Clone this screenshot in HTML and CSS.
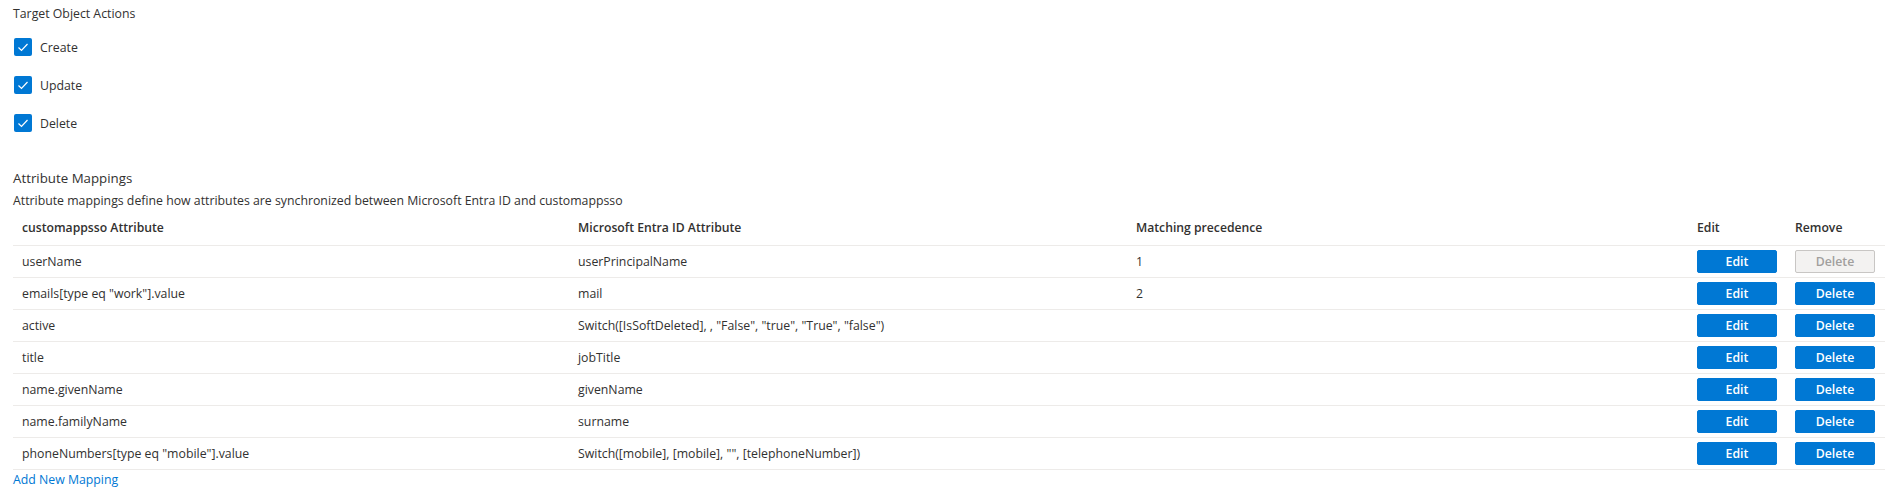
FILE: index.html
```html
<!DOCTYPE html>
<html lang="en">
<head>
  <meta charset="UTF-8" />
  <title>Attribute Mapping</title>
  <link rel="stylesheet" href="styles.css">
</head>
<body>
  <div class="page">
    <div class="section-label">Target Object Actions</div>

    <div class="action-list">
      <label class="check-row">
        <span class="checkbox"><svg viewBox="0 0 18 18"><polyline points="4.5,9.5 7.5,12.5 13.5,6"/></svg></span>
        <span>Create</span>
      </label>
      <label class="check-row">
        <span class="checkbox"><svg viewBox="0 0 18 18"><polyline points="4.5,9.5 7.5,12.5 13.5,6"/></svg></span>
        <span>Update</span>
      </label>
      <label class="check-row">
        <span class="checkbox"><svg viewBox="0 0 18 18"><polyline points="4.5,9.5 7.5,12.5 13.5,6"/></svg></span>
        <span>Delete</span>
      </label>
    </div>

    <div class="mappings-title">Attribute Mappings</div>
    <div class="mappings-desc">Attribute mappings define how attributes are synchronized between Microsoft Entra ID and customappsso</div>

    <table class="mappings">
      <colgroup>
        <col class="col-target">
        <col class="col-source">
        <col class="col-prec">
        <col class="col-edit">
        <col class="col-remove">
      </colgroup>
      <thead>
        <tr>
          <th>customappsso Attribute</th>
          <th>Microsoft Entra ID Attribute</th>
          <th>Matching precedence</th>
          <th>Edit</th>
          <th>Remove</th>
        </tr>
      </thead>
      <tbody id="mappingRows"></tbody>
    </table>

    <a class="add-link" href="#">Add New Mapping</a>
  </div>

  <script>
    const mappings = [
      { target: 'userName', source: 'userPrincipalName', precedence: '1', locked: true },
      { target: 'emails[type eq "work"].value', source: 'mail', precedence: '2' },
      { target: 'active', source: 'Switch([IsSoftDeleted], , "False", "true", "True", "false")', precedence: '' },
      { target: 'title', source: 'jobTitle', precedence: '' },
      { target: 'name.givenName', source: 'givenName', precedence: '' },
      { target: 'name.familyName', source: 'surname', precedence: '' },
      { target: 'phoneNumbers[type eq "mobile"].value', source: 'Switch([mobile], [mobile], "", [telephoneNumber])', precedence: '' }
    ];

    const tbody = document.getElementById('mappingRows');

    mappings.forEach(m => {
      const tr = document.createElement('tr');

      [m.target, m.source, m.precedence].forEach(text => {
        const td = document.createElement('td');
        td.textContent = text;
        tr.appendChild(td);
      });

      const editCell = document.createElement('td');
      const editBtn = document.createElement('button');
      editBtn.className = 'btn';
      editBtn.textContent = 'Edit';
      editCell.appendChild(editBtn);
      tr.appendChild(editCell);

      const removeCell = document.createElement('td');
      const delBtn = document.createElement('button');
      delBtn.className = 'btn';
      delBtn.textContent = 'Delete';
      if (m.locked) delBtn.disabled = true;
      removeCell.appendChild(delBtn);
      tr.appendChild(removeCell);

      tbody.appendChild(tr);
    });
  </script>
</body>
</html>
```

FILE: styles.css
```css
body {
  margin: 0;
  background: #fff;
  color: #323130;
  font-family: "Segoe UI", "Open Sans", sans-serif;
  font-size: 12.3px;
}

.page {
  padding: 4px 0 0 13px;
}

.section-label {
  line-height: 20px;
}

.action-list {
  display: flex;
  flex-direction: column;
  gap: 20px;
  margin-top: 14px;
}

.check-row {
  display: flex;
  align-items: center;
  gap: 8px;
  height: 18px;
  padding-left: 1px;
}

.checkbox {
  width: 18px;
  height: 18px;
  border-radius: 2px;
  background: #0078d4;
  display: flex;
}

.checkbox svg {
  width: 18px;
  height: 18px;
  fill: none;
  stroke: #fff;
  stroke-width: 1.2;
}

.mappings-title {
  margin-top: 36px;
  font-size: 13.3px;
  line-height: 20px;
}

.mappings-desc {
  margin-top: 3px;
  line-height: 20px;
}

.mappings {
  width: 1872px;
  border-collapse: collapse;
  table-layout: fixed;
}

.col-target { width: 556px; }
.col-source { width: 558px; }
.col-prec { width: 561px; }
.col-edit { width: 98px; }

.mappings th {
  text-align: left;
  font-size: 12.2px;
  font-weight: 600;
  height: 32px;
  padding: 0 9px 2px;
  border-bottom: 1px solid #edebe9;
}

.mappings td {
  height: 31px;
  padding: 0 9px;
  border-bottom: 1px solid #edebe9;
  white-space: nowrap;
}

.btn {
  width: 80px;
  height: 23px;
  padding: 0;
  border: 1px solid #0078d4;
  border-radius: 2px;
  background: #0078d4;
  color: #fff;
  font-family: inherit;
  font-size: 12.3px;
  font-weight: 600;
  display: block;
}

.btn:disabled {
  background: #f3f2f1;
  border-color: #c8c6c4;
  color: #a19f9d;
}

.add-link {
  display: block;
  line-height: 20px;
  color: #0078d4;
  text-decoration: none;
}
```
